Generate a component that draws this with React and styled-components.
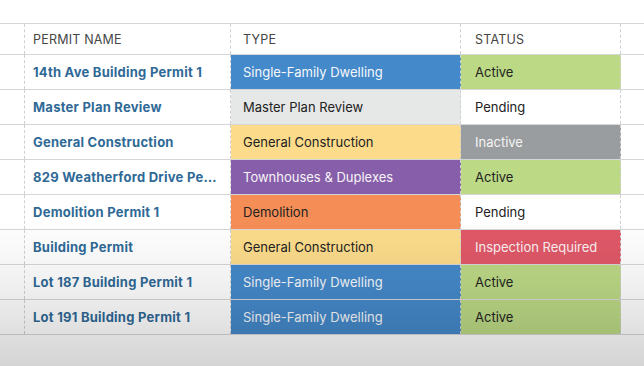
import React from 'react'
import styled, { createGlobalStyle } from 'styled-components'

const permits = [
  { name: '14th Ave Building Permit 1', type: 'sfd', status: 'active' },
  { name: 'Master Plan Review', type: 'review', status: 'pending' },
  { name: 'General Construction', type: 'general', status: 'inactive' },
  { name: '829 Weatherford Drive Permit 1', type: 'town', status: 'active' },
  { name: 'Demolition Permit 1', type: 'demo', status: 'pending' },
  { name: 'Building Permit', type: 'general', status: 'inspection' },
  { name: 'Lot 187 Building Permit 1', type: 'sfd', status: 'active' },
  { name: 'Lot 191 Building Permit 1', type: 'sfd', status: 'active' },
]

const types = {
  sfd: { label: 'Single-Family Dwelling', bg: '#4489ca', fg: '#f6f8fb' },
  review: { label: 'Master Plan Review', bg: '#e6e7e7', fg: '#222' },
  general: { label: 'General Construction', bg: '#fcdc8b', fg: '#222' },
  town: { label: 'Townhouses & Duplexes', bg: '#875ea9', fg: '#f6f4f8' },
  demo: { label: 'Demolition', bg: '#f58d56', fg: '#222' },
}

const statuses = {
  active: { label: 'Active', bg: '#bcd985', fg: '#222' },
  pending: { label: 'Pending', bg: 'transparent', fg: '#222' },
  inactive: { label: 'Inactive', bg: '#9a9da0', fg: '#f4f4f4' },
  inspection: { label: 'Inspection Required', bg: '#e05868', fg: '#fbf1f2' },
}

function App() {
  return (
    <>
      <GlobalStyle />
      <Page>
        <Table>
          <Row header>
            <Cell />
            <HeadCell>Permit Name</HeadCell>
            <HeadCell>Type</HeadCell>
            <HeadCell pad={14}>Status</HeadCell>
            <Cell last />
          </Row>
          {permits.map((p) => {
            const t = types[p.type]
            const s = statuses[p.status]
            return (
              <Row key={p.name}>
                <Cell />
                <NameCell>
                  <span>{p.name}</span>
                </NameCell>
                <Cell bg={t.bg} fg={t.fg}>{t.label}</Cell>
                <Cell bg={s.bg} fg={s.fg} pad={14}>{s.label}</Cell>
                <Cell last />
              </Row>
            )
          })}
        </Table>
        <Shade />
      </Page>
    </>
  )
}

export default App

const GlobalStyle = createGlobalStyle`
  html, body {
    margin: 0;
    background: #fff;
  }
  body {
    font-family: Inter, "Liberation Sans", sans-serif;
    -webkit-font-smoothing: antialiased;
  }
`

const Page = styled.div`
  position: relative;
  width: 644px;
  height: 366px;
  overflow: hidden;
  padding-top: 23px;
  box-sizing: border-box;
`

const Table = styled.div`
  border-top: 1px solid #d6d6d6;
`

const Row = styled.div`
  display: grid;
  grid-template-columns: 21px 210px 230px 160px 1fr;
  height: ${(p) => (p.header ? 30 : 34)}px;
  border-bottom: 1px solid #d6d6d6;
`

const Cell = styled.div`
  display: flex;
  align-items: center;
  padding: 0 12px 0 ${(p) => p.pad || 12}px;
  min-width: 0;
  font-size: 13px;
  color: ${(p) => p.fg || '#222'};
  background: ${(p) => p.bg || 'transparent'};
  border-right: ${(p) => (p.last ? 'none' : '1px dashed #cfcfcf')};
  white-space: nowrap;
  overflow: hidden;
`

const HeadCell = styled(Cell)`
  text-transform: uppercase;
  color: #464646;
  font-size: 12.5px;
  letter-spacing: 0.2px;
`

const NameCell = styled(Cell)`
  font-weight: 700;
  color: #2f6996;
  letter-spacing: 0.25px;
  padding-right: 10px;

  span {
    overflow: hidden;
    text-overflow: ellipsis;
  }
`

const Shade = styled.div`
  position: absolute;
  inset: 0;
  pointer-events: none;
  background: linear-gradient(
    to bottom,
    rgba(0, 0, 0, 0) 60%,
    rgba(0, 0, 0, 0.06) 78%,
    rgba(0, 0, 0, 0.17) 100%
  );
`
